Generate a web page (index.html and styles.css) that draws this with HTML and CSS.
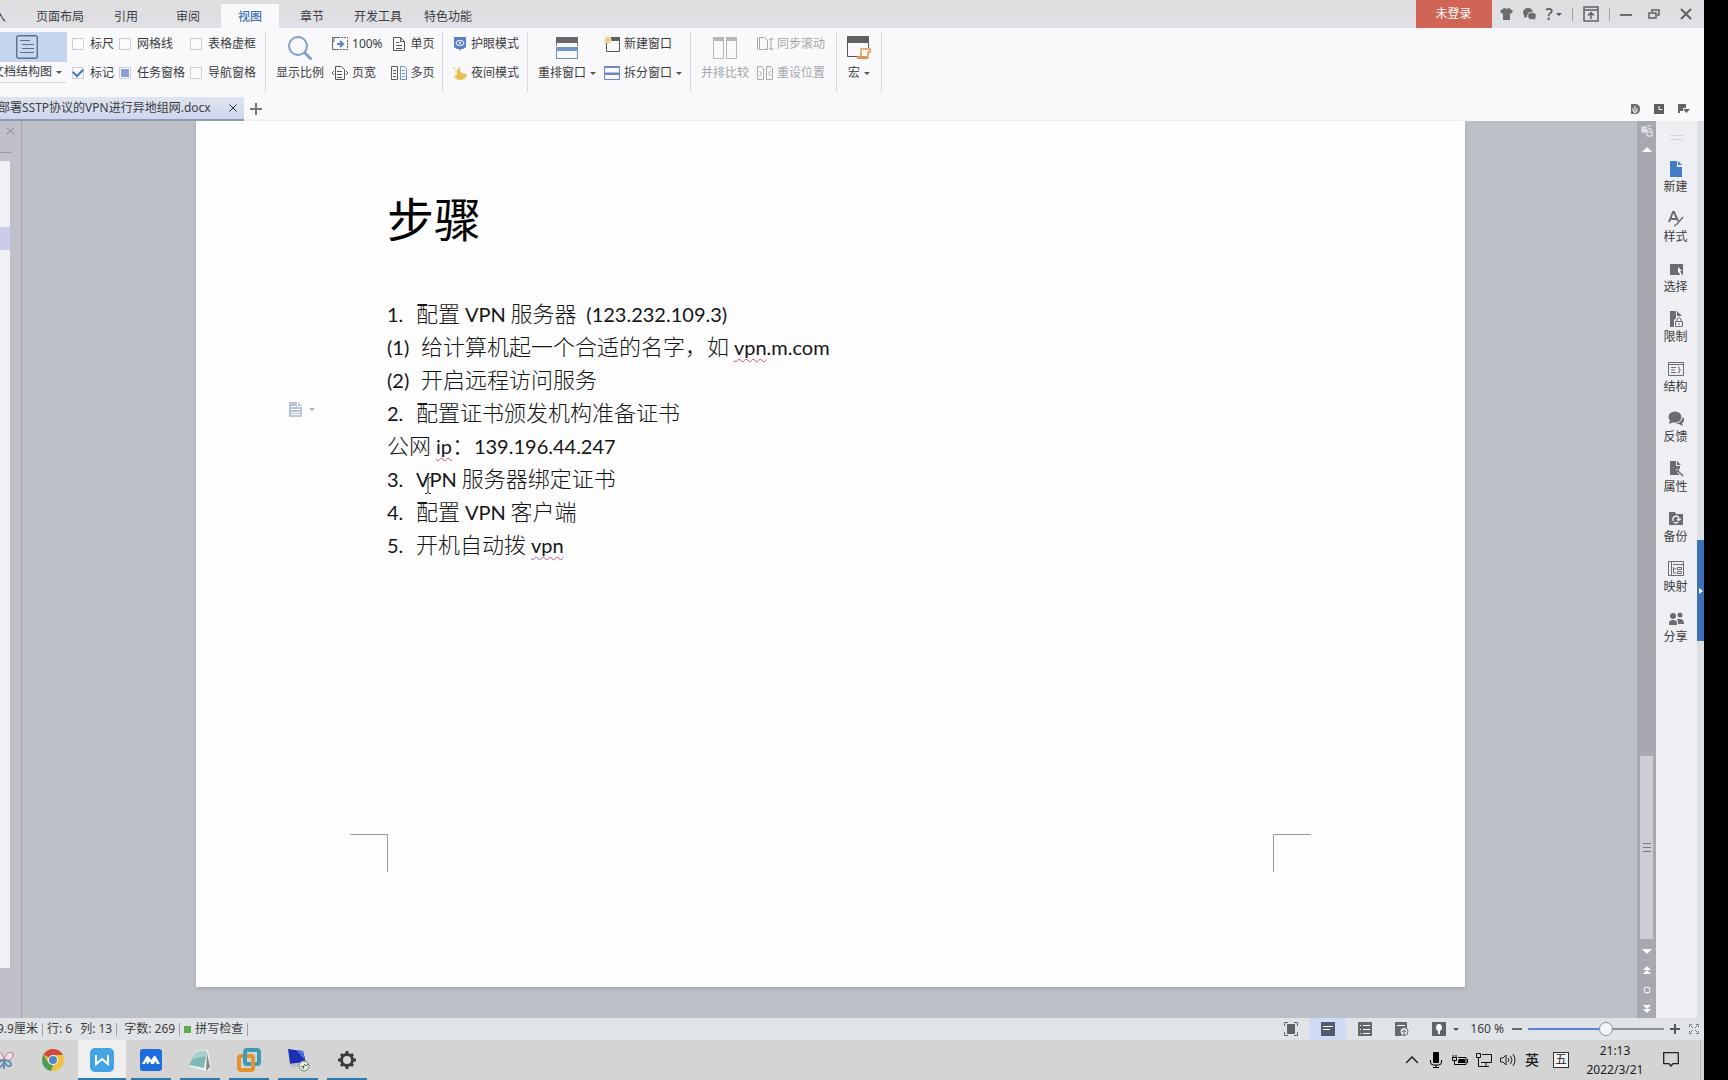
FILE: index.html
```html
<!DOCTYPE html>
<html lang="zh-CN">
<head>
    <meta charset="UTF-8">
    <meta name="viewport" content="width=device-width, initial-scale=1.0">
    <title>部署SSTP协议的VPN进行异地组网.docx</title>
    <link rel="stylesheet" href="styles.css">
</head>
<body>
<div class="screen">
    <header class="titlebar">
        <nav class="tabs">
            <button class="tab">插入</button>
            <button class="tab wide">页面布局</button>
            <button class="tab">引用</button>
            <button class="tab">审阅</button>
            <button class="tab active">视图</button>
            <button class="tab">章节</button>
            <button class="tab wide">开发工具</button>
            <button class="tab wide">特色功能</button>
        </nav>
        <button class="login">未登录</button>
        <div class="window-tools">
            <button aria-label="皮肤"><svg width="13" height="12" viewBox="0 0 13 12"><path fill="#6c6c70" d="M4 0h1q1.500 2 3 0h1l4 3-2 3-1-1v7H3V5L2 6 0 3z"/></svg></button>
            <button aria-label="微信"><svg width="13" height="12" viewBox="0 0 13 12" fill="#6c6c70"><ellipse cx="5" cy="4.500" rx="5" ry="4.500"/><path d="M2 7l-1 3 3-1z"/><ellipse cx="9" cy="8" rx="4.300" ry="3.800" stroke="#dedfe2"/><path d="M10 10l2 2v-3z"/></svg></button>
            <button class="help" aria-label="帮助">?<i class="caret"></i></button>
            <i class="bar"></i>
            <button aria-label="隐藏功能区"><svg width="16" height="16" viewBox="0 0 16 16" fill="none" stroke="#606064" stroke-width="1.500"><path d="M1 1h14v14H1zM1 4h14M8 13V7M5 9.500l3-3 3 3"/></svg></button>
            <i class="bar"></i>
            <button class="win" aria-label="最小化"><svg width="12" height="12" viewBox="0 0 12 12" stroke="#6c6c70" stroke-width="2"><path d="M0 7h12"/></svg></button>
            <button class="win" aria-label="还原"><svg width="12" height="12" viewBox="0 0 12 12" fill="none" stroke="#606064" stroke-width="1.500"><path d="M1 5h7v5H1zM4 4V2h7v5H9"/></svg></button>
            <button class="win close" aria-label="关闭"><svg width="12" height="12" viewBox="0 0 12 12" stroke="#606064" stroke-width="2"><path d="M1 1l10 10M11 1L1 11"/></svg></button>
        </div>
    </header>

    <section class="ribbon">
        <div class="group first">
            <button class="big selected">
                <span class="big-icon"><svg width="22" height="24" viewBox="0 0 22 24" fill="none" stroke="#5f6f88"><rect x=".7" y=".7" width="20.600" height="22.600" rx="2" stroke-width="1.400"/><path d="M4 5.500h10M6 9.500h12M6 13.500h12M4 17.500h14"/></svg></span>
                <span class="big-label">文档结构图<i class="caret"></i></span>
            </button>
            <div class="checks">
                <label><input type="checkbox">标尺</label>
                <label><input type="checkbox">网格线</label>
                <label><input type="checkbox">表格虚框</label>
                <label><input type="checkbox" checked>标记</label>
                <label><input type="checkbox" class="partial">任务窗格</label>
                <label><input type="checkbox">导航窗格</label>
            </div>
        </div>
        <div class="group zoom">
            <button class="big">
                <span class="big-icon"><svg width="24" height="24" viewBox="0 0 24 24" fill="none" stroke="#7f9ccf"><circle cx="10" cy="10" r="9" stroke-width="2"/><path d="M16.500 16.500l7 7" stroke-width="3"/></svg></span>
                <span class="big-label">显示比例</span>
            </button>
            <div class="pair">
                <button><svg width="16" height="16" viewBox="0 0 16 16" fill="none" stroke="#66666b"><path d="M6 1.500H.5v12H5M2 1.500v4H.5"/><path stroke-dasharray="2 1" d="M6 1.500h9.500v12H5"/><path stroke="#5f82c8" stroke-width="2" d="M5 8h6M8 5l3 3-3 3"/></svg>100%</button>
                <button><svg width="16" height="16" viewBox="0 0 16 16" fill="none" stroke="#55555a"><path d="M3.500 1.500h6l3 3v10h-9zM5 6.500h5M5 9.500h5M5 12.500h5M2 6L0 8l2 2M14 6l2 2-2 2"/></svg>页宽</button>
            </div>
            <div class="pair">
                <button><svg width="16" height="16" viewBox="0 0 16 16" fill="none" stroke="#55555a"><path d="M2.500 1.500h7l4 4v9h-11zM9.500 1.500v4h4M5 6.500h3M5 9.500h6M5 12.500h6"/></svg>单页</button>
                <button><svg width="16" height="16" viewBox="0 0 16 16" fill="none" stroke="#5b5b60"><path d="M.5 1.500h6v13h-6zM2 5.500h3M2 8.500h3M2 11.500h3"/><path stroke="#6d8fce" d="M9.500 1.500h4l2 2v11h-6zM11 5.500h3M11 8.500h3M11 11.500h3"/></svg>多页</button>
            </div>
        </div>
        <div class="group modes">
            <div class="pair">
                <button><svg width="14" height="14" viewBox="0 0 14 14"><path fill="#5b80c9" d="M1 0h12v10l-3 2H8l-1 2-1-2H4l-3-2z"/><ellipse cx="7" cy="6" rx="4" ry="2.500" fill="none" stroke="#fff"/><circle cx="7" cy="6" r="1" fill="#fff"/></svg>护眼模式</button>
                <button><svg width="14" height="14" viewBox="0 0 14 14"><path fill="#edbd55" d="M7 0Q5 7 13 8q1 0 1-1 0 7-7 7Q2 14 1 9q2 1 3 0Q3 4 7 0z"/><path stroke="#edbd55" d="M0 2h2M2 5h2"/></svg>夜间模式</button>
            </div>
        </div>
        <div class="group windows">
            <button class="big">
                <span class="big-icon"><svg width="22" height="22" viewBox="0 0 22 22" fill="none"><path stroke="#77777b" d="M.5 9V1h21v8"/><path fill="#68686c" d="M0 0h22v6H0z"/><path stroke="#6a8bc0" d="M.5 10.500h21v11H.5z"/><path fill="#7397cd" d="M0 10h22v4H0z"/></svg></span>
                <span class="big-label">重排窗口<i class="caret"></i></span>
            </button>
            <div class="pair">
                <button><svg width="16" height="16" viewBox="0 0 16 16" fill="none"><path stroke="#55555a" d="M2.500 7v8.500h13v-13H7"/><path fill="#606064" d="M7 1h9v4H7z"/><path stroke="#e9ba55" d="M4 0v8M0 4h8M1 1l6 6M7 1L1 7"/></svg>新建窗口</button>
                <button><svg width="16" height="16" viewBox="0 0 16 16" fill="none" stroke="#6c87c7"><path d="M.5 1.500h15v13H.5zM.5 8h15"/><path stroke-width="2" d="M0 2h16M0 9h16"/></svg>拆分窗口<i class="caret"></i></button>
            </div>
        </div>
        <div class="group compare">
            <button class="big" disabled>
                <span class="big-icon"><svg width="24" height="22" viewBox="0 0 24 22" fill="none" stroke="#b7b7ba"><path d="M.5.5h10v21H.5zM13.500.5h10v21h-10z"/><path stroke-width="4" d="M0 2h11M13 2h11"/></svg></span>
                <span class="big-label">并排比较</span>
            </button>
            <div class="pair">
                <button disabled><svg width="16" height="16" viewBox="0 0 16 16" fill="none" stroke="#a9a9ad"><path d="M.5 1v13M2.500 1.500h5l3 3v9h-8zM14 2v12M12 4l2-2 2 2M12 12l2 2 2-2"/></svg>同步滚动</button>
                <button disabled><svg width="16" height="16" viewBox="0 0 16 16" fill="none" stroke="#a9a9ad"><path d="M.5 1.500h4l2 2v11h-6zM9.500 1.500h4l2 2v11h-6z"/><path d="M2.500 6l2 2.500-2 2.500M13.500 6l-2 2.500 2 2.500"/></svg>重设位置</button>
            </div>
        </div>
        <div class="group macro">
            <button class="big">
                <span class="big-icon"><svg width="24" height="24" viewBox="0 0 24 24" fill="none"><path stroke="#55555a" d="M.5 1v19.500H10M21.500 1v11"/><path fill="#606064" d="M0 0h22v7H0z"/><path stroke="#de9a4b" stroke-width="1.500" d="M14 21v-8h9v3h-2v6H11"/><path fill="#de9a4b" d="M10 20h10v3H10z"/></svg></span>
                <span class="big-label">宏<i class="caret"></i></span>
            </button>
        </div>
    </section>

    <div class="docbar">
        <div class="doc-tab">
            <span>部署SSTP协议的VPN进行异地组网.docx</span>
            <button aria-label="关闭文档"><svg width="8" height="8" viewBox="0 0 8 8" stroke="#333"><path d="M.5.5l7 7M7.500.5l-7 7"/></svg></button>
        </div>
        <button class="add" aria-label="新建标签"><svg width="12" height="12" viewBox="0 0 12 12" stroke="#77777b" stroke-width="2"><path d="M6 0v12M0 6h12"/></svg></button>
        <div class="doc-tools">
            <button aria-label="文档"><svg width="10" height="10" viewBox="0 0 10 10"><path fill="#6c6c70" d="M1 0h4q5 0 5 5t-5 5H1z"/><path fill="none" stroke="#fff" d="M5 9V2M3 4v3l2 2 2-2V4"/></svg></button>
            <button aria-label="历史"><svg width="10" height="10" viewBox="0 0 10 10"><path fill="#606064" d="M0 0h10v10H0z"/><path fill="none" stroke="#fff" d="M5 2v3.500h3"/></svg></button>
            <button aria-label="更多"><svg width="12" height="10" viewBox="0 0 12 10" fill="#66666a"><path d="M0 0h8v4H5v3H2v2H0zM5 5h7L8.500 9z"/></svg></button>
        </div>
    </div>

    <main class="work">
        <aside class="nav-pane">
            <button class="pane-close" aria-label="关闭窗格"><svg width="9" height="8" viewBox="0 0 9 8" stroke="#85858d"><path d="M.5.5l8 7M8.500.5l-8 7"/></svg></button>
            <hr>
            <div class="outline"><div class="outline-current"></div></div>
        </aside>
        <div class="canvas">
            <article class="page">
                <h1>步骤</h1>
                <p><span class="latin num">1.</span>配置 <span class="latin">VPN</span> 服务器&nbsp; <span class="latin">(123.232.109.3)</span></p>
                <p><span class="latin paren">(1)</span>给计算机起一个合适的名字，如 <span class="latin"><u>vpn</u>.m.com</span></p>
                <p><span class="latin paren">(2)</span>开启远程访问服务</p>
                <p class="marked">
                    <button class="paste-tag" aria-label="段落布局"><svg width="14" height="15" viewBox="0 0 14 15"><path fill="#b9c4d6" d="M0 0h8v5h5v10H0zM9 0l4 4H9z"/><path stroke="#fff" d="M2 4.500h5M2 7.500h9M2 10.500h9M2 12.500h9"/></svg><i class="caret"></i></button>
                    <span class="latin num">2.</span>配置证书颁发机构准备证书
                </p>
                <p>公网 <span class="latin"><u>ip</u></span>：<span class="latin">139.196.44.247</span></p>
                <p class="marked"><span class="latin num">3.</span><span class="latin">VPN</span> 服务器绑定证书
                    <svg class="ibeam" width="8" height="17" viewBox="0 0 8 17" fill="none" stroke="#222"><path d="M1 .5h2l1 1 1-1h2M4 1v15M1 16.500h2l1-1 1 1h2"/></svg>
                </p>
                <p><span class="latin num">4.</span>配置 <span class="latin">VPN</span> 客户端</p>
                <p><span class="latin num">5.</span>开机自动拨 <span class="latin"><u>vpn</u></span></p>
                <div class="corners"><i class="corner left"></i><i class="corner right"></i></div>
            </article>
        </div>
        <div class="scrollbar">
            <button aria-label="选择浏览对象"><svg width="12" height="12" viewBox="0 0 12 12" fill="none" stroke="#f4f4f8"><path d="M1 2h4v5H1zM3 2v5M1 4.500h4M6 1h4M6 10V6l3-3 2 3v5H6zM7 7h3"/></svg></button>
            <button aria-label="向上"><svg width="10" height="6" viewBox="0 0 10 6" fill="#fff"><path d="M5 0l5 5H0z"/></svg></button>
            <div class="track"><div class="thumb"></div></div>
            <button aria-label="向下"><svg width="10" height="6" viewBox="0 0 10 6" fill="#fff"><path d="M5 5l5-5H0z"/></svg></button>
            <button aria-label="上一页"><svg width="8" height="9" viewBox="0 0 8 9" fill="#fff"><path d="M4 0l4 4H0zM4 4l4 4H0z"/></svg></button>
            <button aria-label="浏览对象"><svg width="8" height="8" viewBox="0 0 8 8" fill="none" stroke="#fff"><circle cx="4" cy="4" r="3"/></svg></button>
            <button aria-label="下一页"><svg width="8" height="9" viewBox="0 0 8 9" fill="#fff"><path d="M4 5l4-4H0zM4 9l4-4H0z"/></svg></button>
        </div>
        <aside class="side-tools">
            <button><svg width="16" height="16" viewBox="0 0 16 16"><path fill="#447cc9" d="M2 0h7v6h5v10H2zM10 0l4 4h-4z"/></svg>新建</button>
            <button><svg width="16" height="16" viewBox="0 0 16 16" fill="none" stroke="#6c6c70" stroke-width="2"><path d="M1 11L5 1h1l4 9M3 8h5"/><path stroke-width="1.500" d="M15 6l-6 7-3 2"/></svg>样式</button>
            <button><svg width="16" height="16" viewBox="0 0 16 16"><path fill="#6c6c70" d="M2 3h13v11H2z"/><path fill="#fff" d="M10 6l4 4h-2l2 4h-2l-1-3-1 1z"/></svg>选择</button>
            <button><svg width="16" height="16" viewBox="0 0 16 16"><path fill="#6c6c70" d="M2 0h6v7L6 9v7H2zM9 0l5 5H9z"/><path fill="none" stroke="#6c6c70" d="M9 10V8q2-3 4 0v2M7.500 10.500h7v5h-7zM11 12v2"/></svg>限制</button>
            <button><svg width="16" height="16" viewBox="0 0 16 16" fill="none" stroke="#6c6c70"><path d="M.5 1.500h15v13H.5zM.5 3.500h15M3 6.500h5M3 9h4M3 11.500h5M10 6h1v2l1.500 1L11 10v2h-1"/></svg>结构</button>
            <button><svg width="16" height="16" viewBox="0 0 16 16" fill="#6c6c70"><ellipse cx="7" cy="6" rx="6.500" ry="5.500"/><path d="M2 9l-1 4 5-2zM15 6q3 4-1 6l1 3-4-2H7q6-1 8-7z"/></svg>反馈</button>
            <button><svg width="16" height="16" viewBox="0 0 16 16"><path fill="#6c6c70" d="M2 0h6v5h4v9H2zM9 0l4 4H9z"/><path fill="none" stroke="#eeeff3" stroke-width="4" d="M9 8l6 7"/><path fill="none" stroke="#6c6c70" stroke-width="1.500" d="M10 10l5 5M7 7q0 4 3 3 1-3-1-4"/></svg>属性</button>
            <button><svg width="16" height="16" viewBox="0 0 16 16"><path fill="#6c6c70" d="M1 1h6l1 2h7v11H1z"/><path fill="none" stroke="#eeeff3" stroke-width="1.300" d="M5 10q-1-4 3-5 3 0 3 4M11 10l-2-2M11 9l2-1M6 11q2 2 4 0"/></svg>备份</button>
            <button><svg width="16" height="16" viewBox="0 0 16 16" fill="none" stroke="#6c6c70"><path d="M.5.500h15v14H.5zM3.500 1v13M5 3.500h10M5.500 6v6h3M5.500 8h3M9.500 6.500h4v2h-4zM9.500 10.500h4v2h-4z"/></svg>映射</button>
            <button><svg width="16" height="16" viewBox="0 0 16 16" fill="#6c6c70"><circle cx="5" cy="5" r="3"/><circle cx="12" cy="4" r="2.500"/><path d="M1 14v-2q0-3 4-3t4 3v2zM10 13v-2l-1-3h4q3 1 3 5z"/></svg>分享</button>
        </aside>
        <button class="drawer" aria-label="展开"><svg width="4" height="6" viewBox="0 0 4 6" fill="#fff"><path d="M0 0l4 3-4 3z"/></svg></button>
    </main>

    <footer class="status">
        <div class="status-left">
            <span>9.9厘米</span><i class="bar"></i>
            <span class="pos">行: 6</span><span>列: 13</span><i class="bar"></i>
            <span class="count">字数: 269</span><i class="bar"></i>
            <span class="spell">拼写检查</span><i class="bar"></i>
        </div>
        <div class="views">
            <button aria-label="全屏"><svg width="14" height="14" viewBox="0 0 14 14"><path fill="#606468" d="M3 2h8v10H3z"/><path fill="none" stroke="#606468" d="M4 .5H.5V4M10 .5h3.500V4M.5 10v3.500H4M10 13.500h3.500V10"/></svg></button>
            <button class="on" aria-label="页面视图"><svg width="14" height="14" viewBox="0 0 14 14"><path fill="#515a70" d="M0 0h14v14H0z"/><path stroke="#fff" d="M2 4.500h10M2 7.500h7"/></svg></button>
            <button aria-label="大纲"><svg width="14" height="14" viewBox="0 0 14 14"><path fill="#66696c" d="M0 0h14v14H0z"/><path stroke="#fff" d="M2 3.500h1M5 3.500h7M2 7.500h1M5 7.500h7M2 11.500h1M5 11.500h7"/></svg></button>
            <button aria-label="Web版式"><svg width="14" height="14" viewBox="0 0 14 14"><path fill="#66696c" d="M0 0h12v6L6 14H0z"/><path stroke="#fff" d="M2 3.500h8"/><circle cx="9" cy="9.500" r="4" fill="#e4e6e9" stroke="#66696c"/><path fill="none" stroke="#66696c" d="M7 10l2-2 2 2M9 8v5"/></svg></button>
            <button class="lamp" aria-label="护眼"><svg width="14" height="14" viewBox="0 0 14 14"><path fill="#606468" d="M0 0h14v14H0z"/><path fill="#fff" d="M4 6q0-4 3-4t3 4q0 2-2 3v3H6V9Q4 8 4 6z"/></svg><i class="caret"></i></button>
        </div>
        <label class="zoom-label" for="zoom">160 %</label>
        <button class="step" aria-label="缩小"><svg width="10" height="10" viewBox="0 0 10 10" stroke="#66696c" stroke-width="2"><path d="M0 5h10"/></svg></button>
        <input type="range" id="zoom" min="0" max="100" value="58">
        <button class="step" aria-label="放大"><svg width="10" height="10" viewBox="0 0 10 10" stroke="#55585b" stroke-width="2"><path d="M5 0v10M0 5h10"/></svg></button>
        <button class="expand" aria-label="适应"><svg width="10" height="10" viewBox="0 0 10 10" fill="none" stroke="#77797d"><path d="M3 .5H.5V3M7 .5h2.500V3M.5 7v2.500H3M7 9.500h2.500V7M2 2l2 2M8 2L6 4M2 8l2-2M8 8L6 6"/></svg></button>
    </footer>

    <div class="taskbar">
        <div class="apps">
            <button aria-label="截图"><svg width="22" height="22" viewBox="0 0 22 22" fill="#f4dfe5" stroke="#b58092"><path d="M10 11Q3 11 3 4q5-4 8 6 4-9 9-6 1 7-8 8z"/><path fill="none" stroke="#5e91b2" stroke-width="2" d="M11 11q-6 1-6 6 4 3 7-6 6 1 6 5-4 4-7-5v9"/></svg></button>
            <button aria-label="浏览器"><svg width="22" height="22" viewBox="0 0 22 22"><circle cx="11" cy="11" r="11" fill="#f0c244"/><path fill="#cf4940" d="M11 11L1.500 5.500Q5 0 11 0q7 0 10 6H11z"/><path fill="#4b9f5d" d="M1.500 5.500L7 15l4 1-2 6Q0 20 0 11q0-3 1.500-5.500z"/><circle cx="11" cy="11" r="5" fill="#f4f4f4"/><circle cx="11" cy="11" r="4" fill="#5186ca"/></svg></button>
            <button class="open current" aria-label="WPS"><svg width="24" height="24" viewBox="0 0 24 24"><rect width="24" height="24" rx="5" fill="#42a3e6"/><path fill="none" stroke="#fff" stroke-width="2" d="M6 7v9l6-5 6 5V7"/></svg></button>
            <button class="open" aria-label="会议"><svg width="22" height="22" viewBox="0 0 22 22"><rect width="22" height="22" rx="3" fill="#1d6ce0"/><path fill="#fff" d="M2 15l4-7q1-2 3 0l2 3 3-4q1-1 2 1l4 7h-3l-2-3-1 3h-3l-1-3-2 3H7l-1-3-1 3z"/></svg></button>
            <button class="open" aria-label="记事本"><svg width="24" height="22" viewBox="0 0 24 22"><path fill="#f2f5f4" d="M8 2l12-1 3 19-4 2L1 17z"/><path fill="#7fb9b7" d="M8 3l11-1-3 17-15-3z"/><path fill="#a4d2cf" d="M8 3l11-1-1 5-13 3z"/><path fill="#86877f" d="M19 4l3 14-4 4z"/></svg></button>
            <button class="open" aria-label="虚拟机"><svg width="24" height="24" viewBox="0 0 24 24" fill="none" stroke-width="4"><rect x="8" y="2" width="14" height="14" rx="2" stroke="#3d9bb8"/><rect x="2" y="8" width="14" height="14" rx="2" stroke="#e3932f"/><path stroke="#3d9bb8" d="M8 6v6"/></svg></button>
            <button class="open" aria-label="远程桌面"><svg width="24" height="24" viewBox="0 0 24 24"><path fill="#1b2fb0" d="M2 1l15 2 3 12-16 1z"/><path fill="#5170dd" d="M10 2l7 1 2 9z"/><path fill="#bcc0c6" d="M3 16l15-2 2 3-14 3z"/><circle cx="18" cy="18" r="5" fill="#e9ecdf" stroke="#7e8877"/><path fill="none" stroke="#44614a" d="M15 19l3-1-1 3M18 16l2 2 2-2"/></svg></button>
            <button class="open" aria-label="设置"><svg width="20" height="20" viewBox="0 0 20 20" fill="none" stroke="#3b3b3e"><circle cx="10" cy="10" r="5.500" stroke-width="3"/><path stroke-width="3" d="M10 1v3M10 16v3M1 10h3M16 10h3M4 4l2 2M14 14l2 2M16 4l-2 2M6 14l-2 2"/></svg></button>
        </div>
        <div class="tray">
            <button aria-label="显示隐藏图标"><svg width="12" height="8" viewBox="0 0 12 8" fill="none" stroke="#222" stroke-width="1.500"><path d="M0 7l6-6 6 6"/></svg></button>
            <button aria-label="麦克风"><svg width="12" height="16" viewBox="0 0 12 16"><rect x="3" width="6" height="11" rx="1"/><path fill="none" stroke="#000" d="M.5 8v2q0 3 3 3h5q3 0 3-3V8M6 13v3M3 15.500h6"/></svg></button>
            <button aria-label="电源"><svg width="16" height="12" viewBox="0 0 16 12"><path d="M7 5h6v4H6V7z"/><path fill="none" stroke="#000" d="M1 1v2M4 1v2M.5 3.500h4v3h-4zM2.500 6v4.500H14v-7H6M15.500 5v4"/></svg></button>
            <button aria-label="网络"><svg width="16" height="14" viewBox="0 0 16 14" fill="none" stroke="#111"><path d="M6 1.500h9.500v8H5M.5.5h4v4h-4zM2.500 5v8.500H13M10 10v3"/></svg></button>
            <button aria-label="音量"><svg width="16" height="14" viewBox="0 0 16 14" fill="none" stroke="#222"><path d="M.5 5v4H3l3 3V2L3 5zM8 5q2 2 0 4M10.500 3q3 4 0 8M13 1q4 6 0 12"/></svg></button>
            <button class="ime">英</button>
            <button class="wubi">五</button>
            <div class="clock"><time>21:13</time><time>2022/3/21</time></div>
            <button class="notice" aria-label="通知"><svg width="16" height="16" viewBox="0 0 16 16" fill="none" stroke="#222" stroke-width="1.300"><path d="M.7.700h14.600v11H10L8 14l-2-2.300H.7z"/></svg></button>
        </div>
    </div>
</div>
</body>
</html>
```
FILE: styles.css
```css
* {
    box-sizing: border-box;
}

body {
    margin: 0;
    background: #000;
    font-family: "Noto Sans", "Noto Sans CJK SC", sans-serif;
    font-size: 12px;
    line-height: 16px;
    color: #3c3c40;
}

button {
    display: flex;
    align-items: center;
    justify-content: center;
    padding: 0;
    border: none;
    background: none;
    font: inherit;
    color: inherit;
    white-space: nowrap;
}

svg {
    display: block;
    flex: none;
}

.screen {
    display: flex;
    flex-direction: column;
    height: 100vh;
    margin-right: 24px;
    overflow: hidden;
    background: #f9f9fb;
}

.caret {
    flex: none;
    border: 3px solid transparent;
    border-top-color: #55555a;
    border-bottom: none;
}

.bar {
    width: 1px;
    height: 13px;
    background: #a2a2a8;
}

/* Title bar */
.titlebar {
    display: flex;
    flex: none;
    height: 28px;
    background: linear-gradient(#dfdfe1, #e0dfe5);
}

.tabs {
    display: flex;
    flex: 1;
    margin-left: -37px;
    padding-top: 4px;
}

.tab {
    width: 58px;
    margin: 0 2px;
    padding-top: 1px;
}

.tab.wide {
    width: 70px;
    margin: 0;
}

.tab.active {
    background: #f9f9fc;
    color: #3f70b5;
    font-weight: 500;
}

.login {
    width: 76px;
    background: #d06555;
    color: #fff;
}

.window-tools {
    display: flex;
    align-items: center;
    gap: 10px;
    padding: 0 12px 0 8px;
}

.help {
    gap: 3px;
    font-size: 16px;
    font-weight: 600;
    color: #66666a;
}

.win + .win {
    margin-left: 6px;
}

.win + .close {
    margin-left: 10px;
}

/* Ribbon */
.ribbon {
    display: flex;
    flex: none;
    height: 68px;
    padding-top: 4px;
}

.group {
    display: flex;
    height: 60px;
    padding: 0 10px;
    border-right: 1px solid #d8d8de;
}

.group.first {
    width: 279px;
    margin-left: -13px;
    padding: 0;
}

.big {
    display: flex;
    flex-direction: column;
    justify-content: flex-start;
    height: 51px;
}

.big-icon {
    display: flex;
    align-items: center;
    justify-content: center;
    width: 100%;
    height: 31px;
}

.big-label {
    display: flex;
    align-items: center;
    gap: 4px;
    height: 20px;
}

.big.selected {
    width: 80px;
    border-bottom: 1px solid #d9dae2;
}

.selected .big-icon {
    background: #c6d6ee;
}

.checks {
    display: grid;
    grid-template-columns: 47px 71px auto;
    grid-template-rows: 20px 20px;
    row-gap: 9px;
    height: 50px;
    margin: 2px 0 0 5px;
    white-space: nowrap;
}

.checks label {
    display: flex;
    align-items: center;
    gap: 6px;
}

.checks input {
    display: flex;
    align-items: center;
    justify-content: center;
    appearance: none;
    width: 12px;
    height: 12px;
    margin: 0;
    border: 1px solid #cfcfd6;
    background: #fbfbfc;
}

.checks input:checked::after {
    content: '';
    width: 9px;
    height: 5px;
    margin-bottom: 3px;
    border: solid #4873bd;
    border-width: 0 0 2px 2px;
    transform: rotate(-45deg);
}

.checks .partial {
    border-color: #c6cfe6;
    background: #8d9ddb;
    box-shadow: inset 0 0 0 1px #fff;
}

.pair {
    display: flex;
    flex-direction: column;
    align-items: flex-start;
    gap: 9px;
    padding-top: 2px;
}

.pair button {
    gap: 4px;
    height: 20px;
}

.zoom {
    width: 177px;
    gap: 8px;
}

.zoom .pair + .pair {
    margin-left: auto;
}

.modes {
    width: 85px;
}

.windows {
    width: 163px;
    gap: 8px;
}

.compare {
    width: 146px;
    gap: 8px;
}

.macro {
    width: 45px;
}

.group button:disabled {
    color: #a7a7ab;
}

/* Document tabs */
.docbar {
    display: flex;
    flex: none;
    align-items: center;
    height: 25px;
    background: #f9f8fb;
}

.doc-tab {
    display: flex;
    align-items: center;
    justify-content: space-between;
    width: 244px;
    height: 24px;
    padding-right: 7px;
    border-bottom: 2px solid #8e9bb8;
    background: linear-gradient(#dfe5ef, #ced6ee);
    white-space: nowrap;
}

.doc-tab span {
    margin-left: -2px;
}

.add {
    margin-left: 6px;
}

.doc-tools {
    display: flex;
    gap: 14px;
    margin-left: auto;
    padding-right: 14px;
}

/* Work area */
.work {
    display: flex;
    flex: 1;
    min-height: 0;
    position: relative;
    background: #bcc1c8;
}

.nav-pane {
    display: flex;
    flex-direction: column;
    width: 22px;
    padding: 6px 0 50px;
    border-right: 1px solid #a6a5b1;
    background: #c0c0ca;
}

.pane-close {
    width: 9px;
    height: 8px;
    margin-left: 6px;
}

.nav-pane hr {
    width: 12px;
    margin: 17px 0 8px;
    border: none;
    border-top: 1px solid #9c9ca8;
}

.outline {
    flex: 1;
    width: 10px;
    padding-top: 66px;
    background: #eff1f4;
}

.outline-current {
    height: 23px;
    background: #c9cdea;
}

.canvas {
    display: flex;
    flex: 1;
    padding: 0 172px 31px 174px;
}

.page {
    display: flex;
    flex: 1;
    flex-direction: column;
    padding: 63px 154px 115px;
    background: #fdfdfd;
    box-shadow: 0 2px 4px #a4a7ae;
    color: #151515;
    font-family: "Noto Sans CJK SC", sans-serif;
}

.page h1 {
    margin: 0 0 46px 37px;
    font-size: 47px;
    font-weight: 400;
    line-height: 66px;
    color: #000;
}

.page p {
    height: 33px;
    margin: 0 0 0 37px;
    font-size: 22px;
    font-weight: 300;
    line-height: 33px;
    white-space: nowrap;
}

.latin {
    font-family: Lato, sans-serif;
    font-size: 20px;
    font-weight: 400;
    line-height: 20px;
}

.num {
    display: inline-block;
    width: 29px;
}

.paren {
    display: inline-block;
    width: 34px;
}

.page u {
    text-decoration: underline wavy #c2527c 1px;
    text-decoration-skip-ink: none;
    text-underline-offset: 3px;
}

.marked {
    position: relative;
}

.paste-tag {
    position: absolute;
    top: 7px;
    left: -98px;
    gap: 6px;
}

.paste-tag .caret {
    border-top-color: #a9afbb;
}

.ibeam {
    position: absolute;
    top: 16px;
    left: 37px;
}

.corners {
    display: flex;
    justify-content: space-between;
    margin-top: auto;
}

.corner {
    width: 38px;
    height: 38px;
    border-top: 1px solid #97979c;
}

.corner.left {
    border-right: 1px solid #97979c;
}

.corner.right {
    border-left: 1px solid #97979c;
}

/* Scroll bar */
.scrollbar {
    display: flex;
    flex-direction: column;
    width: 19px;
    background: #a8a8b3;
}

.scrollbar button {
    height: 19px;
}

.track {
    display: flex;
    flex: 1;
    flex-direction: column;
    justify-content: flex-end;
    padding: 0 3px 3px;
}

.thumb {
    height: 183px;
    background: linear-gradient(#77777f, #77777f) center 87px / 8px 1px no-repeat,
        linear-gradient(#77777f, #77777f) center 91px / 8px 1px no-repeat,
        linear-gradient(#77777f, #77777f) center 95px / 8px 1px no-repeat,
        #cdcdd5;
}

/* Side tools */
.side-tools {
    display: flex;
    flex-direction: column;
    gap: 14px;
    width: 48px;
    padding-top: 14px;
    border-right: 7px solid #dcdfe2;
    background: #eeeff3;
}

.side-tools::before {
    content: '';
    align-self: center;
    width: 14px;
    height: 3px;
    margin-bottom: 6px;
    border: solid #d5d5db;
    border-width: 1px 0;
}

.side-tools button {
    flex-direction: column;
    gap: 2px;
    height: 36px;
    margin-right: 2px;
}

.drawer {
    position: absolute;
    top: 419px;
    right: 0;
    width: 7px;
    height: 101px;
    background: #3e6fb9;
}

/* Status bar */
.status {
    display: flex;
    flex: none;
    align-items: center;
    height: 22px;
    padding-right: 5px;
    background: #e1e4e7;
    white-space: nowrap;
}

.status-left {
    display: flex;
    flex: 1;
    align-items: center;
    gap: 4px;
    margin-left: -3px;
}

.pos {
    margin-right: 4px;
}

.count {
    margin-left: 3px;
}

.spell {
    display: flex;
    align-items: center;
    gap: 4px;
}

.spell::before {
    content: '';
    width: 7px;
    height: 7px;
    background: #62ad4b;
}

.views {
    display: flex;
    height: 22px;
}

.views button {
    width: 37px;
}

.views .on {
    background: #cfdbf3;
}

.views .lamp {
    width: 50px;
    gap: 7px;
}

.zoom-label {
    margin-right: 8px;
}

.status input {
    appearance: none;
    width: 136px;
    height: 14px;
    margin: 0 6px;
    background: none;
}

.status input::-webkit-slider-runnable-track {
    height: 2px;
    background: linear-gradient(to right, #5a82d0 56%, #8b8e92 56%);
}

.status input::-webkit-slider-thumb {
    appearance: none;
    width: 14px;
    height: 14px;
    margin-top: -6px;
    border: 1px solid #8c8f93;
    border-radius: 50%;
    background: #f5f6f7;
}

.expand {
    margin-left: 9px;
}

/* Taskbar */
.taskbar {
    display: flex;
    flex: none;
    justify-content: space-between;
    height: 40px;
    background: #d4d4d4;
    color: #1c1c1e;
}

.apps {
    display: flex;
    gap: 9px;
    margin-left: -16px;
}

.apps button {
    width: 40px;
    padding-top: 2px;
    border-bottom: 2px solid transparent;
}

.apps .open {
    border-bottom-color: #2e79ae;
}

.apps .current {
    width: 48px;
    margin: 0 -4px;
    background: #efefef;
}

.tray {
    display: flex;
    align-items: center;
    margin-right: 3px;
    border-right: 1px solid #b4b4b8;
}

.tray button {
    width: 24px;
}

.tray .ime {
    font-size: 14px;
    font-weight: 500;
}

.tray .wubi {
    width: 16px;
    height: 16px;
    margin: 0 9px;
    border: 1px solid #333;
    background: #f6f6f6;
    line-height: 14px;
}

.clock {
    display: flex;
    flex-direction: column;
    align-items: center;
    gap: 3px;
    width: 74px;
}

.tray .notice {
    width: 38px;
    margin-right: 10px;
}
```
